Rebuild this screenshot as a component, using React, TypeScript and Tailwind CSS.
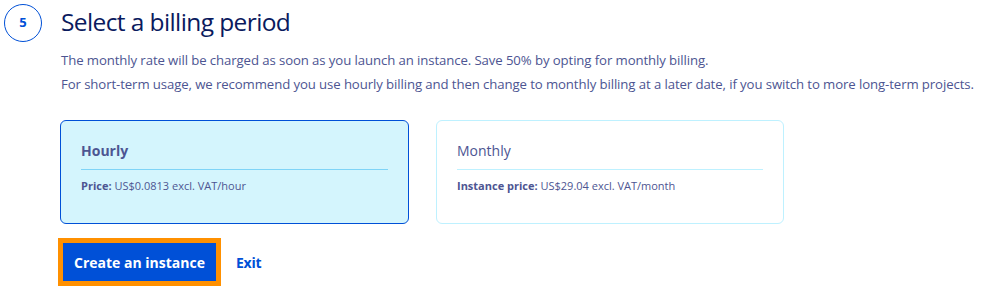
import React from "react";

export default function App() {
  return (
    <div className="w-[986px] h-[291px] bg-white overflow-hidden" style={{ fontFamily: '"Open Sans", "Noto Sans", sans-serif' }}>
      <div className="flex pt-[4px] pl-[4px]">
        <div className="w-[38px] h-[38px] shrink-0 rounded-full border border-[#0050d7] flex items-center justify-center text-[13px] font-bold text-[#0050d7]">5</div>
        <div className="ml-[19px]">
          <h1 className="text-[24.5px] leading-[36px] text-[#0a1a5e] font-normal tracking-[-0.6px]">Select a billing period</h1>
          <p className="mt-[8px] text-[13.2px] leading-[24px] text-[#4d5592] tracking-[-0.1px]">
            The monthly rate will be charged as soon as you launch an instance. Save 50% by opting for monthly billing.
            <br />
            For short-term usage, we recommend you use hourly billing and then change to monthly billing at a later date, if you switch to more long-term projects.
          </p>
          <div className="mt-[24px] flex gap-[27px] -ml-[1px]">
            <div className="w-[349px] h-[104px] rounded-[6px] border border-[#0050d7] bg-[#d4f5fd] px-[20px] pt-[20px]">
              <div className="text-[14px] font-bold text-[#4d5592] leading-[20px]">Hourly</div>
              <div className="mt-[8px] h-px bg-[#7fd4f7]" />
              <div className="mt-[8px] text-[11px] text-[#4d5592] leading-[16px]"><span className="font-bold">Price:</span> US$0.0813 excl. VAT/hour</div>
            </div>
            <div className="w-[348px] h-[104px] rounded-[6px] border border-[#bef1ff] bg-white px-[20px] pt-[20px]">
              <div className="text-[14px] text-[#4d5592] leading-[20px]">Monthly</div>
              <div className="mt-[8px] h-px bg-[#bef1ff]" />
              <div className="mt-[8px] text-[11px] text-[#4d5592] leading-[16px]"><span className="font-bold">Instance price:</span> US$29.04 excl. VAT/month</div>
            </div>
          </div>
          <div className="mt-[14px] -ml-[3px] flex items-center">
            <div className="border-[5px] border-[#ff9000]">
              <button className="h-[38px] px-[11px] bg-[#0050d7] text-white text-[14px] font-bold">Create an instance</button>
            </div>
            <a className="ml-[15px] text-[14px] font-bold text-[#0050d7] tracking-[-0.2px]">Exit</a>
          </div>
        </div>
      </div>
    </div>
  );
}
